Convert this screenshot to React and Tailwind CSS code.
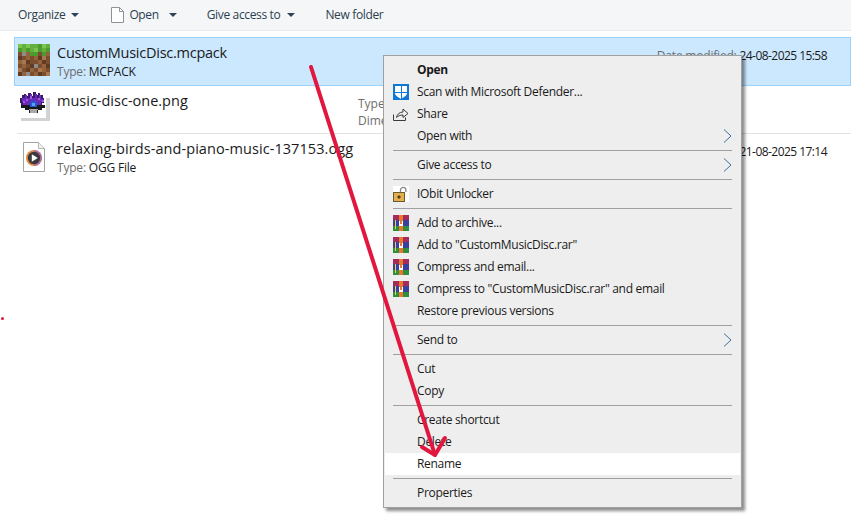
import React from "react";

const F = { fontFamily: '"Open Sans", "Noto Sans", sans-serif' };

function Caret({ className = "" }) {
  return (
    <svg width="8" height="4" viewBox="0 0 8 4" className={className}>
      <path d="M0 0h8L4 4z" fill="#2f4358" />
    </svg>
  );
}

function Grass() {
  const c = {
    g: "#63b13c", h: "#4d9a2e", l: "#79c552", b: "#7a4e2e", d: "#5f3c23", m: "#94633c",
    t: "#a8774f", s: "#8d8d8d",
  };
  const rows = ["lglgghlg", "hghglhgh", "bsmhhbhm", "dbmbmdtb", "mtdbbmdb", "bmbdsbmd", "tbdmbtmb", "dmsbmdbt"];
  return (
    <svg width="32" height="32" viewBox="0 0 8 8" shapeRendering="crispEdges">
      {rows.map((r, y) =>
        r.split("").map((k, x) => <rect key={`${x}-${y}`} x={x} y={y} width="1" height="1" fill={c[k]} />)
      )}
    </svg>
  );
}

function Disc() {
  return (
    <svg width="32" height="32" viewBox="0 0 32 32" shapeRendering="crispEdges">
      <path d="M3 28h25V8h4v23H3z" fill="#d2d2d2" />
      <g transform="translate(0,-4) scale(1,1.16)">
        <path d="M6 7h2v2h2V6h3v3h2V5h3v3h2V6h2v2h3v2h1v5h-2v3H3v-3H2v-5h2V8h2z" fill="#3a1a6e" />
        <path d="M4 10h3V8h2v2h3V7h2v3h3V7h2v3h2V8h2v3h2v3h-2v2H5v-2H4z" fill="#6a2bb8" />
        <path d="M8 11h2v2H8zM12 9h2v2h-2zM20 10h2v2h-2zM24 12h2v2h-2zM5 13h2v2H5z" fill="#a35be0" />
        <path d="M3 16h24v3h-3v2h-4v2h-9v-2H7v-2H3z" fill="#1a1a1e" />
        <path d="M11 20h9v1h-1v2h-7v-2h-1z" fill="#a8a8a8" />
        <path d="M13 13h5v2h1v3h-7v-3h1z" fill="#1d5bd6" />
        <path d="M14 15h3v2h-3z" fill="#5fa0f5" />
      </g>
    </svg>
  );
}

function Ogg() {
  return (
    <svg width="22" height="30" viewBox="0 0 22 30">
      <path d="M.5.5h15l6 6v23H.5z" fill="#fff" stroke="#a3a3a3" />
      <path d="M15.5.5v6h6" fill="#f1f1f1" stroke="#b5b5b5" />
      <circle cx="11" cy="16" r="8" fill="#e08b3e" />
      <path d="M11 8a8 8 0 0 1 0 16z" fill="#a15fc6" opacity="0.75" />
      <circle cx="11" cy="16" r="6.2" fill="#3a3a3c" />
      <path d="M8.8 12.3v7.4l6-3.7z" fill="#fff" />
    </svg>
  );
}

function Doc() {
  return (
    <svg width="13" height="16" viewBox="0 0 13 16">
      <path d="M.5.5h8l4 4v11H.5z" fill="#fff" stroke="#8d9298" />
      <path d="M8.5.5v4h4" fill="none" stroke="#8d9298" />
    </svg>
  );
}

function Shield() {
  return (
    <svg width="16" height="16" viewBox="0 0 16 16" shapeRendering="crispEdges">
      <rect width="16" height="16" fill="#0f78d4" />
      <path d="M2 2h12v7c0 2.5-3 4-6 6-3-2-6-3.5-6-6z" fill="#fff" shapeRendering="auto" />
      <path d="M7.5 2h1v13h-1zM2 7.5h12v1H2z" fill="#0f78d4" />
    </svg>
  );
}

function Share() {
  return (
    <svg width="16" height="16" viewBox="0 0 16 16" fill="none" stroke="#3a3a3a" strokeWidth="1">
      <path d="M.5 8.5v6h12v-3" />
      <path d="M3.5 11.5c.5-3 3-5.5 6.5-5.5V3l5 4.5-5 4V9c-3 0-5 1-6.500 2.500z" />
    </svg>
  );
}

function Unlock() {
  return (
    <svg width="16" height="16" viewBox="0 0 16 16">
      <rect width="16" height="16" fill="#fff" />
      <path d="M7.5 6V4a2.700 2.700 0 0 1 5.400 0V6" fill="none" stroke="#8a8a8a" strokeWidth="1.300" />
      <rect x="0.5" y="6.5" width="11" height="9" fill="#e3b04b" stroke="#6b5a33" />
      <path d="M6 9l2 2-2 2-2-2z" fill="#4e3f1f" />
    </svg>
  );
}

function Rar() {
  return (
    <svg width="16" height="16" viewBox="0 0 16 16" shapeRendering="crispEdges">
      <rect y="0" width="16" height="5" fill="#a52b5c" />
      <rect y="5" width="16" height="6" fill="#3b3f9e" />
      <rect y="11" width="16" height="5" fill="#2f8f3f" />
      <rect x="6" width="4" height="16" fill="#e8792b" />
      <rect x="2" y="5" width="1" height="9" fill="#e7d44a" />
      <rect x="6" y="6" width="1" height="4" fill="#fff" />
      <rect x="9" y="6" width="1" height="4" fill="#fff" />
      <rect x="6" y="9" width="4" height="2" fill="#fff" />
    </svg>
  );
}

const ICONS = { shield: <Shield />, share: <Share />, unlock: <Unlock />, rar: <Rar /> };

const MENU = [
  { t: "Open", bold: true },
  { t: "Scan with Microsoft Defender...", i: "shield" },
  { t: "Share", i: "share" },
  { t: "Open with", sub: true },
  "-",
  { t: "Give access to", sub: true },
  "-",
  { t: "IObit Unlocker", i: "unlock" },
  "-",
  { t: "Add to archive...", i: "rar" },
  { t: 'Add to "CustomMusicDisc.rar"', i: "rar" },
  { t: "Compress and email...", i: "rar" },
  { t: 'Compress to "CustomMusicDisc.rar" and email', i: "rar" },
  { t: "Restore previous versions" },
  "-",
  { t: "Send to", sub: true },
  "-",
  { t: "Cut" },
  { t: "Copy" },
  "-",
  { t: "Create shortcut" },
  { t: "Delete" },
  { t: "Rename", hover: true },
  "-",
  { t: "Properties" },
];

function ContextMenu() {
  return (
    <div className="absolute left-[383px] top-[55px] w-[359px] border border-[#a0a0a0] bg-[#eeeeee] px-[1px] py-[3px] shadow-[3px_3px_3px_rgba(0,0,0,0.45)]">
      {MENU.map((m, i) =>
        m === "-" ? (
          <div key={i} className="flex h-[7px] items-center px-[8px]">
            <div className="h-px w-full bg-[#a0a0a0]" />
          </div>
        ) : (
          <div
            key={i}
            className={`flex h-[22px] items-center px-[8px] text-[12px] text-[#1a1a1a] ${m.hover ? "bg-white" : ""} ${m.bold ? "font-bold" : ""}`}
          >
            <span className="flex w-[24px] shrink-0 items-center">{m.i ? ICONS[m.i] : null}</span>
            <span className="flex-1 tracking-[-0.3px]">{m.t}</span>
            {m.sub && (
              <svg width="9" height="14" viewBox="0 0 9 14" fill="none" stroke="#3c6f9e" strokeWidth="1">
                <path d="M1 .5l7 6.5-7 6.5" />
              </svg>
            )}
          </div>
        )
      )}
    </div>
  );
}

function Row({ icon, name, nameClass = "", type, right, className = "", iconClass = "", sep }) {
  return (
    <div className={`relative flex h-[48px] ${className}`}>
      <div className={`flex shrink-0 justify-start ${iconClass}`}>{icon}</div>
      <div className="flex flex-col">
        <div className={`mt-[4px] whitespace-nowrap text-[14.5px] leading-[22px] text-[#1a1a1a] ${nameClass}`}>{name}</div>
        {type && (
          <div className="mt-[-1px] whitespace-nowrap text-[12px] leading-[17px] tracking-[-0.2px]">
            <span className="text-[#6d6d6d]">Type: </span>
            <span className="text-[#1a1a1a]">{type}</span>
          </div>
        )}
      </div>
      {right}
      {sep && <div className="absolute bottom-0 left-[3px] right-0 h-px bg-[#e2e2e2]" />}
    </div>
  );
}

export default function App() {
  return (
    <div style={F} className="relative h-[518px] w-[851px] overflow-hidden bg-white">
      <div className="flex h-[31px] items-center border-b border-[#e8e9ea] bg-[#f5f6f7] pl-[18px] text-[12px] tracking-[-0.35px] text-[#2b3e50]">
        <span>Organize</span>
        <Caret className="ml-[6px]" />
        <span className="ml-[32px]"><Doc /></span>
        <span className="ml-[5px]">Open</span>
        <Caret className="ml-[10px]" />
        <span className="ml-[30px]">Give access to</span>
        <Caret className="ml-[7px]" />
        <span className="ml-[30px]">New folder</span>
      </div>
      <div className="pl-[14px] pt-[6px]">
        <Row
          className="h-[49px] border border-[#99d1ff] bg-[#cce8ff]"
          iconClass="w-[42px] pt-[6px] pl-[3px]"
          icon={<Grass />}
          name="CustomMusicDisc.mcpack"
          nameClass="tracking-[-0.25px]"
          type="MCPACK"
          right={
            <div className="absolute right-[23px] top-[9px] whitespace-nowrap text-[12px] leading-[17px] tracking-[-0.2px]">
              <span className="text-[#6d6d6d]">Date modified: </span>
              <span className="tracking-[-0.55px] text-[#1a1a1a]">24-08-2025 15:58</span>
            </div>
          }
        />
        <Row
          iconClass="w-[43px] pt-[4px] pl-[4px]"
          icon={<Disc />}
          name="music-disc-one.png"
          sep
          right={
            <div className="absolute left-[344px] top-[9px] text-[12px] leading-[17px] text-[#6d6d6d]">
              <div>Type</div>
              <div>Dime</div>
            </div>
          }
        />
        <Row
          iconClass="w-[43px] pt-[8px] pl-[9px]"
          icon={<Ogg />}
          name="relaxing-birds-and-piano-music-137153.ogg"
          nameClass="tracking-[0.07px]"
          type="OGG File"
          right={
            <div className="absolute right-[24px] top-[9px] whitespace-nowrap text-[12px] leading-[17px] tracking-[-0.55px] text-[#1a1a1a]">
              21-08-2025 17:14
            </div>
          }
        />
      </div>
      <ContextMenu />
      <svg className="absolute left-0 top-0" width="851" height="518" fill="none" stroke="#e2173f" strokeWidth="4" strokeLinecap="round" strokeLinejoin="round">
        <path d="M311 67L435 455" />
        <path d="M422 447L435 455L445 438" />
      </svg>
      <div className="absolute left-[1px] top-[317px] h-[3px] w-[3px] rounded-full bg-[#e2173f]" />
    </div>
  );
}
